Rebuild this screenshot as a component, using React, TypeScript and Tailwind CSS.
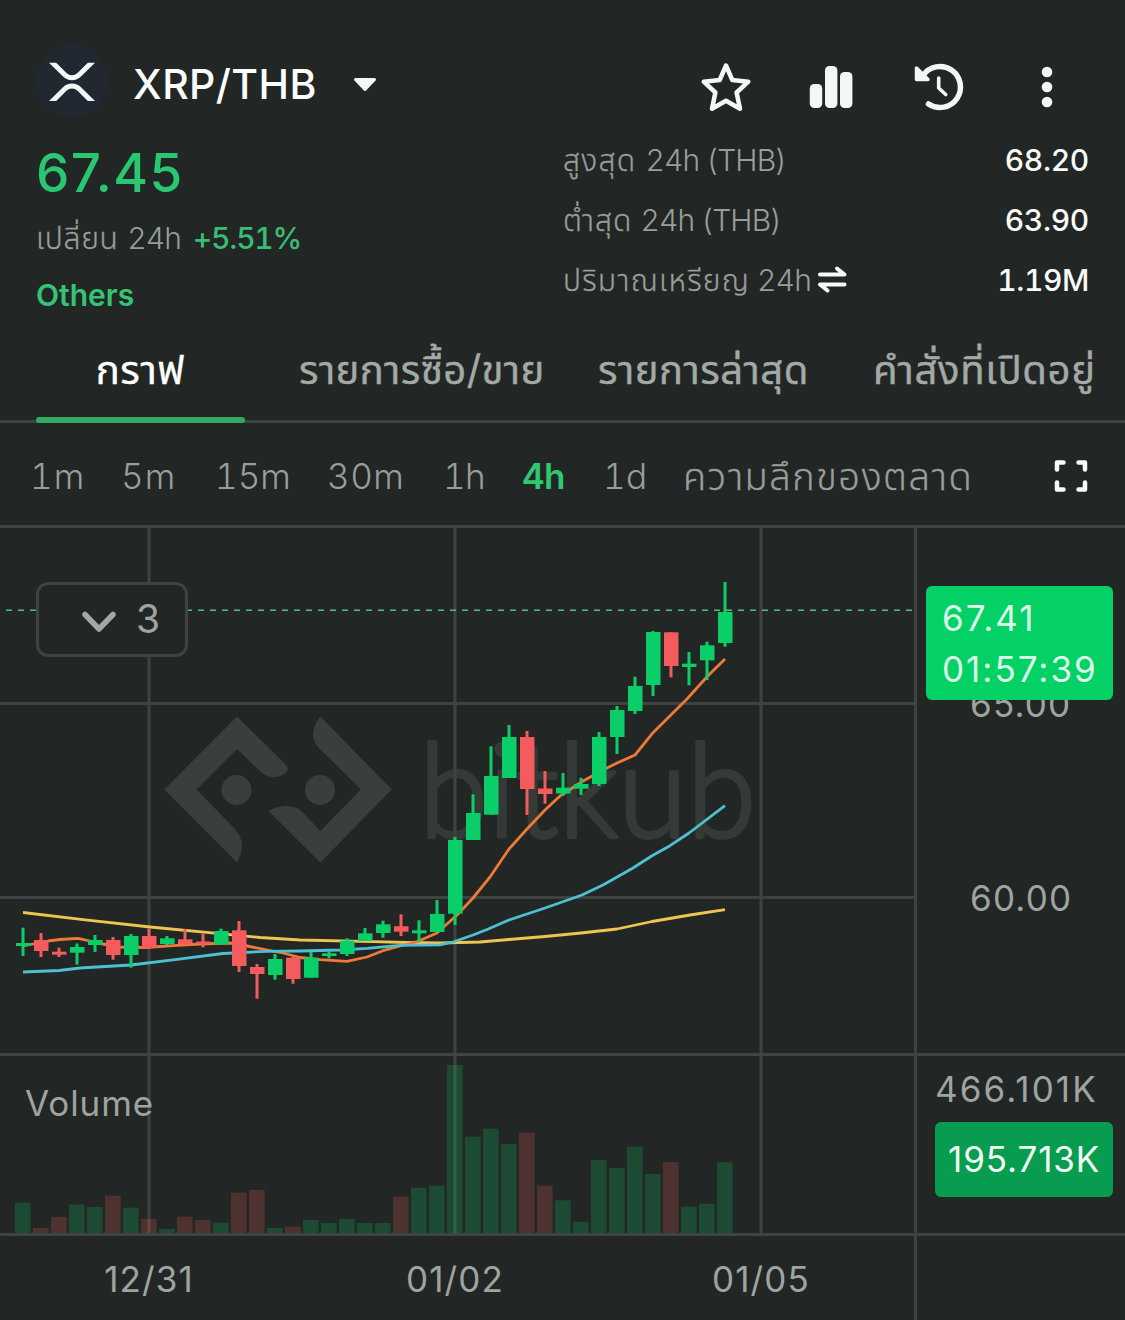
type Candle = { up: boolean; high: number; low: number; top: number; bottom: number; vol: number };

const c = (dir: "g" | "r", high: number, low: number, top: number, bottom: number, vol: number): Candle => ({
  up: dir === "g", high, low, top, bottom, vol,
});

// y values are in chart space, vol is the top edge of the volume bar
const candles: Candle[] = [
  c("g", 927.7, 956, 943, 946, 1202.7),
  c("r", 933, 957, 940, 951, 1228),
  c("r", 947.7, 957, 951.7, 954.7, 1217),
  c("g", 943.5, 964.7, 947, 952.7, 1204.5),
  c("g", 935, 952, 940, 945, 1207),
  c("r", 937, 959.7, 940, 955, 1195.7),
  c("g", 934, 967.7, 936, 955, 1207.7),
  c("r", 928.7, 949, 936, 947.7, 1219),
  c("g", 936, 945, 938.3, 944, 1229),
  c("r", 929, 944.3, 939.3, 944.3, 1216.7),
  c("r", 934, 947.3, 941.5, 944, 1220),
  c("g", 928.7, 945, 931, 944.3, 1222.7),
  c("r", 921, 972, 930.3, 966, 1192.7),
  c("r", 964, 998.7, 967, 974, 1190),
  c("g", 954, 979.7, 959, 975, 1228),
  c("r", 957, 983.7, 957.7, 979, 1226.7),
  c("g", 952, 977.7, 957.7, 977.7, 1220),
  c("g", 951.7, 958.3, 953.3, 956, 1223),
  c("g", 938.3, 956, 940.7, 954, 1219),
  c("g", 928, 941, 933.3, 941, 1223),
  c("g", 920.7, 937.7, 924.3, 933, 1223),
  c("r", 914.3, 936, 926.3, 931.7, 1196.7),
  c("g", 920.3, 941.7, 930.3, 933.3, 1187.7),
  c("g", 900, 932, 914, 932, 1185.7),
  c("g", 837, 925, 840, 913.7, 1065),
  c("g", 794.3, 840, 813, 840, 1136.7),
  c("g", 746.3, 814.7, 776, 814.7, 1128.7),
  c("g", 725, 778, 737, 778, 1144),
  c("r", 731, 815, 737, 789, 1132.7),
  c("r", 771, 803.7, 788.5, 794, 1185.7),
  c("g", 773, 796, 787.7, 793.5, 1200.3),
  c("g", 777.7, 795, 784, 788.7, 1221.7),
  c("g", 732, 786, 737, 784, 1160),
  c("g", 706, 754, 710, 737, 1168),
  c("g", 676.7, 714, 686, 711, 1146.7),
  c("g", 631, 696, 632, 685, 1174),
  c("r", 632.3, 677.3, 632.3, 666, 1162),
  c("g", 652, 685.3, 663.7, 667, 1206.7),
  c("g", 641.7, 680, 645.3, 660.3, 1203.7),
  c("g", 582, 646.7, 612, 643, 1162.3),
];

const xOf = (i: number) => 23 + i * 18;

const orange =
  "23,946 48,941 60,939.5 78,938.3 90,941 100,943.5 120,947 145,947.5 173,945.7 200,944 230,943 247,946 283,953 300,957.5 320,959.7 347,961.3 367,957 383,950.7 400,946 417,941.7 437,933 457,915 473,898 490,877 509,849 527,829 545,810 560,796 583,781 607,768 617,763 635,755 653,732.7 687,699 707,676.7 725,659";
const blue =
  "23,972 59,970.5 80,968 131,965 177,959.3 223,953.5 267,951.3 300,951 340,950 367,948.3 400,945.3 440,944.8 453,942 473,935 487,929.5 509,920 545,908 582,895 603,885 633,868 652,855.7 670,845.7 689,833 725,805.7";
const yellow =
  "23,912.5 83,919.7 150,927 217,933.3 260,937.5 300,940 373,941.7 407,942.5 440,943 480,942 509,939.5 545,936.5 581,933 617,929 652,921.5 690,915 725,909.7";

const intervals = [
  { label: "1m", cls: "w-[91px] tracking-[1px]" },
  { label: "5m", cls: "w-[94px] tracking-[1px]" },
  { label: "15m", cls: "w-[112px]" },
  { label: "30m", cls: "w-[116px] tracking-[0.5px]" },
  { label: "1h", cls: "w-[79px] tracking-[-0.6px]" },
  { label: "4h", cls: "w-[81px] font-semibold tracking-[-0.6px] text-[#2fc771]" },
  { label: "1d", cls: "w-[80px] tracking-[0.3px]" },
  { label: "ความลึกของตลาด", cls: "text-[38px] tracking-[1.5px] [-webkit-text-stroke:0.3px]" },
];

function Header() {
  return (
    <header className="flex h-[118px] items-start pt-11 pl-9">
      <svg className="h-[74px] w-[72px] flex-none" viewBox="36 44 72 74">
        <ellipse cx="72" cy="81" rx="35.500" ry="36.500" fill="#222936" fillOpacity="0.75" />
        <g fill="#f4f8fb">
          <path d="M49 62.7h7.2l10.3 10.2a7.8 7.8 0 0 0 11 0L87.800 62.700h7.200L81 76.500a12.900 12.900 0 0 1-18 0z" />
          <path d="M49 101h7.200l10.300-10.200a7.800 7.800 0 0 1 11 0L87.800 101h7.200L81 87.200a12.900 12.900 0 0 0-18 0z" />
        </g>
      </svg>
      <h1 className="ml-[25px] w-[220px] pt-1.5 text-[41px] leading-[68px] font-medium tracking-[0.4px] text-[#fafcfb]">XRP/THB</h1>
      <svg className="mt-[33px] h-[15px] w-6 flex-none" viewBox="353 77 24 15">
        <path d="M355.500 79.500h19L365 89.500z" fill="#f4f7f5" stroke="#f4f7f5" strokeWidth="3" strokeLinejoin="round" />
      </svg>
      <div className="mt-[17px] ml-auto flex pr-[70px]">
        <svg className="mr-14 h-[52px] w-[52px]" viewBox="700 61 52 52" fill="none" stroke="#f4f8f5" strokeWidth="4.500" strokeLinejoin="round">
          <path d="M726 65.500L732.300 80L748.300 81.700L736.600 92.500L740 108.700L726 100.700L712 108.700L715.400 92.500L703.700 81.700L719.700 80Z" />
        </svg>
        <svg className="mr-[59px] h-[52px] w-[46px]" viewBox="808 61 46 52" fill="#f4f8f5">
          <rect x="809.800" y="84" width="12.400" height="24" rx="4.500" />
          <rect x="825" y="66" width="12.400" height="42" rx="4.500" />
          <rect x="840" y="72" width="12.400" height="36" rx="4.500" />
        </svg>
        <svg className="mr-[74px] h-[52px] w-[52px]" viewBox="913 61 52 52" fill="none" stroke="#f4f8f5" strokeLinecap="round" strokeLinejoin="round">
          <path d="M923 75.500A20.500 20.500 0 1 1 928.500 104" strokeWidth="5.500" />
          <path d="M916.500 68v11.500h11.500l-5-5z" fill="#f4f8f5" strokeWidth="3.500" />
          <path d="M938.700 78v10l7 6.500" strokeWidth="3.600" />
        </svg>
        <svg className="h-[52px] w-4" viewBox="1039 61 16 52" fill="#f4f8f5">
          <circle cx="1047" cy="72" r="5.300" />
          <circle cx="1047" cy="87" r="5.300" />
          <circle cx="1047" cy="102" r="5.300" />
        </svg>
      </div>
    </header>
  );
}

function Stats() {
  return (
    <section className="mt-3 flex h-[190px] text-[30px] tabular-nums">
      <div className="w-[563px] pt-[13px] pl-[36px]">
        <div className="text-[53px] leading-[60px] font-medium tracking-[1.4px] text-[#2ac772] normal-nums">67.45</div>
        <div className="mt-[15px] leading-10 font-light text-[#999e9b]">
          <span className="tracking-[0.7px] [-webkit-text-stroke:0.3px]">เปลี่ยน </span>
          <span className="tracking-[-1px]">24h</span>
          <span className="ml-3 font-medium tracking-[-1.2px] text-[#38bd75]">+5.51%</span>
        </div>
        <div className="mt-[17px] leading-10 font-semibold text-[#35c475]">Others</div>
      </div>
      <dl className="flex-1 pr-9 leading-[60px] font-light text-[#999e9b]">
        <div className="flex justify-between">
          <dt>
            <span className="tracking-[1.3px] [-webkit-text-stroke:0.3px]">สูงสุด</span>
            <span className="ml-[9px] tracking-[-0.9px]">24h (THB)</span>
          </dt>
          <dd className="font-medium tracking-[-0.3px] text-[#f8faf9]">68.20</dd>
        </div>
        <div className="flex justify-between">
          <dt>
            <span className="tracking-[1px] [-webkit-text-stroke:0.3px]">ต่ำสุด</span>
            <span className="ml-[8px] tracking-[-0.9px]">24h (THB)</span>
          </dt>
          <dd className="font-medium tracking-[-0.3px] text-[#f8faf9]">63.90</dd>
        </div>
        <div className="flex">
          <dt>
            <span className="tracking-[1.2px] [-webkit-text-stroke:0.3px]">ปริมาณเหรียญ</span>
            <span className="ml-[7px] tracking-[-0.8px]">24h</span>
          </dt>
          <svg className="mt-[13px] ml-[5px] h-8 w-8" viewBox="817 263 32 32" fill="none" stroke="#f8faf9" strokeWidth="4" strokeLinecap="round" strokeLinejoin="round">
            <path d="M821 274.500h24.500l-7.500-6" />
            <path d="M845.500 284.500h-24.500l7.500 6" />
          </svg>
          <dd className="ml-auto font-medium tracking-[-0.4px] text-[#f8faf9]">1.19M</dd>
        </div>
      </dl>
    </section>
  );
}

function Tabs() {
  return (
    <nav className="flex h-[103px] border-b-[3px] border-[#3e4441] pl-9 text-center text-[40px] leading-[100px] font-normal whitespace-nowrap text-[#a3a9a5]">
      <div className="relative w-[209px] flex-none tracking-[0.6px] text-white [-webkit-text-stroke:0.4px]">
        กราฟ
        <span className="absolute -bottom-[3px] left-0 h-1.5 w-full rounded-full bg-[#2fab65]" />
      </div>
      <div className="ml-[54px] w-[245px] flex-none tracking-[0.4px] [-webkit-text-stroke:0.4px]">รายการซื้อ/ขาย</div>
      <div className="ml-[54px] w-[209px] flex-none tracking-[0.5px] [-webkit-text-stroke:0.4px]">รายการล่าสุด</div>
      <div className="ml-[66px] w-[221px] flex-none tracking-[0.7px] [-webkit-text-stroke:0.4px]">คำสั่งที่เปิดอยู่</div>
    </nav>
  );
}

function Intervals() {
  return (
    <div className="flex h-[105px] items-center border-b-[3px] border-[#3e4240] pt-1 pr-9 pl-[30px] text-[35px] leading-[44px] font-light whitespace-nowrap text-[#999e9b] tabular-nums">
      {intervals.map((it) => (
        <span key={it.label} className={"flex-none " + it.cls}>{it.label}</span>
      ))}
      <svg className="ml-auto h-9 w-9 flex-none" viewBox="1053 457.500 36 36" fill="none" stroke="#fafcfb" strokeWidth="4.500" strokeLinecap="round" strokeLinejoin="round">
        <path d="M1057 469v-7h6.500M1078.500 462h6.500v7M1085 482v7h-6.500M1063.500 489h-6.500v-7" />
      </svg>
    </div>
  );
}

function Watermark() {
  return (
    <g fill="#3b3f3c">
      <path d="M164.300 789.500L237 716.500L286 765Q290 769 285 773.500Q273 781 262 773L237 749L196.500 789.500L234 828Q248 842 237 862.500Z" />
      <path d="M320.300 716.500L391.700 789.500L320.300 862.500L268.500 811Q284 803 297 808Q300 809 303 812.500L320.300 831L361 789.500L318 747Q307 734 320.300 716.500Z" />
      <circle cx="236.500" cy="790" r="15" />
      <circle cx="320" cy="790" r="15" />
      <text x="419" y="837" fontFamily="Lato, sans-serif" fontWeight="300" fontSize="131" fill="#363a37" stroke="#363a37" strokeWidth="4" strokeLinejoin="round" textLength="337" lengthAdjust="spacingAndGlyphs">bitkub</text>
    </g>
  );
}

function PriceChart() {
  return (
    <svg className="block h-[525px] w-[914px] flex-none" viewBox="0 528 914 525">
      <Watermark />
      <path d="M149 528V1053M455 528V1053M761 528V1053M0 703.500H914M0 897.500H914" stroke="#3e4240" strokeWidth="3" />
      <path d="M6 610.300H914" stroke="#54b889" strokeWidth="1.400" strokeDasharray="6 6" />
      <g fill="none" strokeWidth="2.800" strokeLinejoin="round">
        <polyline points={yellow} stroke="#efc552" />
        <polyline points={orange} stroke="#ee7a35" />
        <polyline points={blue} stroke="#4fc0d2" />
      </g>
      {candles.map((k, i) => (
        <g key={i} fill={k.up ? "#0acf68" : "#f45b5c"}>
          <rect x={xOf(i) - 1.5} y={k.high} width="3" height={k.low - k.high} />
          <rect x={xOf(i) - 7} y={k.top} width="14.500" height={k.bottom - k.top} />
        </g>
      ))}
    </svg>
  );
}

function VolumeChart() {
  return (
    <svg className="block h-[177px] w-[914px] flex-none" viewBox="0 1056 914 177">
      <path d="M149 1056V1233M455 1056V1233M761 1056V1233" stroke="#3e4240" strokeWidth="3" />
      {candles.map((k, i) => (
        <rect key={i} x={xOf(i) - 8} y={k.vol} width="15.600" height={1233 - k.vol} fill={k.up ? "#10d068" : "#f5605a"} fillOpacity="0.21" />
      ))}
    </svg>
  );
}

export default function App() {
  return (
    <main className="h-[1320px] w-[1125px] overflow-hidden bg-[#222725] font-['Inter','Noto_Sans_Thai','sans-serif']">
      <Header />
      <Stats />
      <Tabs />
      <Intervals />

      <div className="text-[35px] text-[#9fa4a1]">
        <div className="relative flex h-[528px] border-b-[3px] border-[#3e4441]">
          <PriceChart />
          <div className="absolute top-[54px] left-9 flex h-[75px] w-[152px] items-center rounded-xl border-[3px] border-[#3e4240] bg-[#222725] pl-[40px]">
            <svg className="mt-0.5 h-7 w-10" viewBox="0 0 40 28" fill="none" stroke="#a3a8a5" strokeWidth="5.500" strokeLinecap="round" strokeLinejoin="round">
              <path d="M6 7.500L20 22L34 7.500" />
            </svg>
            <span className="-mt-[3px] ml-[17px] text-[39px] leading-none">3</span>
          </div>
          <div className="relative flex-1 border-l-[3px] border-[#3e4240] pt-[154px] pl-[53px] leading-[44px] tracking-[1.2px]">
            <div>65.00</div>
            <div className="mt-[150px]">60.00</div>
            <div className="absolute top-[58px] left-[9px] h-[114px] w-[187px] rounded-md bg-[#04d165] pt-[7px] pl-4 leading-[51px] text-[#dcfbe8]">
              <div className="tracking-[2px]">67.41</div>
              <div className="tracking-[2px]">01:57:39</div>
            </div>
          </div>
        </div>

        <div className="relative flex h-[180px] border-b-[3px] border-[#3e4441]">
          <VolumeChart />
          <span className="absolute top-[25px] left-[25px] leading-[44px] tracking-[0.9px]">Volume</span>
          <div className="flex-1 border-l-[3px] border-[#3e4240] pt-[11px] pl-[18px] leading-[44px]">
            <div className="tracking-[2.1px]">466.101K</div>
            <div className="mt-[11px] h-[75px] w-[178px] rounded-md bg-[#079c4f] pl-[13px] leading-[75px] tracking-[0.9px] text-[#effcf4]">195.713K</div>
          </div>
        </div>

        <div className="flex h-[84px]">
          <div className="-ml-1 grid w-[918px] flex-none grid-cols-3 text-center leading-[87px] tracking-[1.1px]">
            <span>12/31</span>
            <span>01/02</span>
            <span>01/05</span>
          </div>
          <div className="flex-1 border-l-[3px] border-[#3e4240]" />
        </div>
      </div>
    </main>
  );
}
